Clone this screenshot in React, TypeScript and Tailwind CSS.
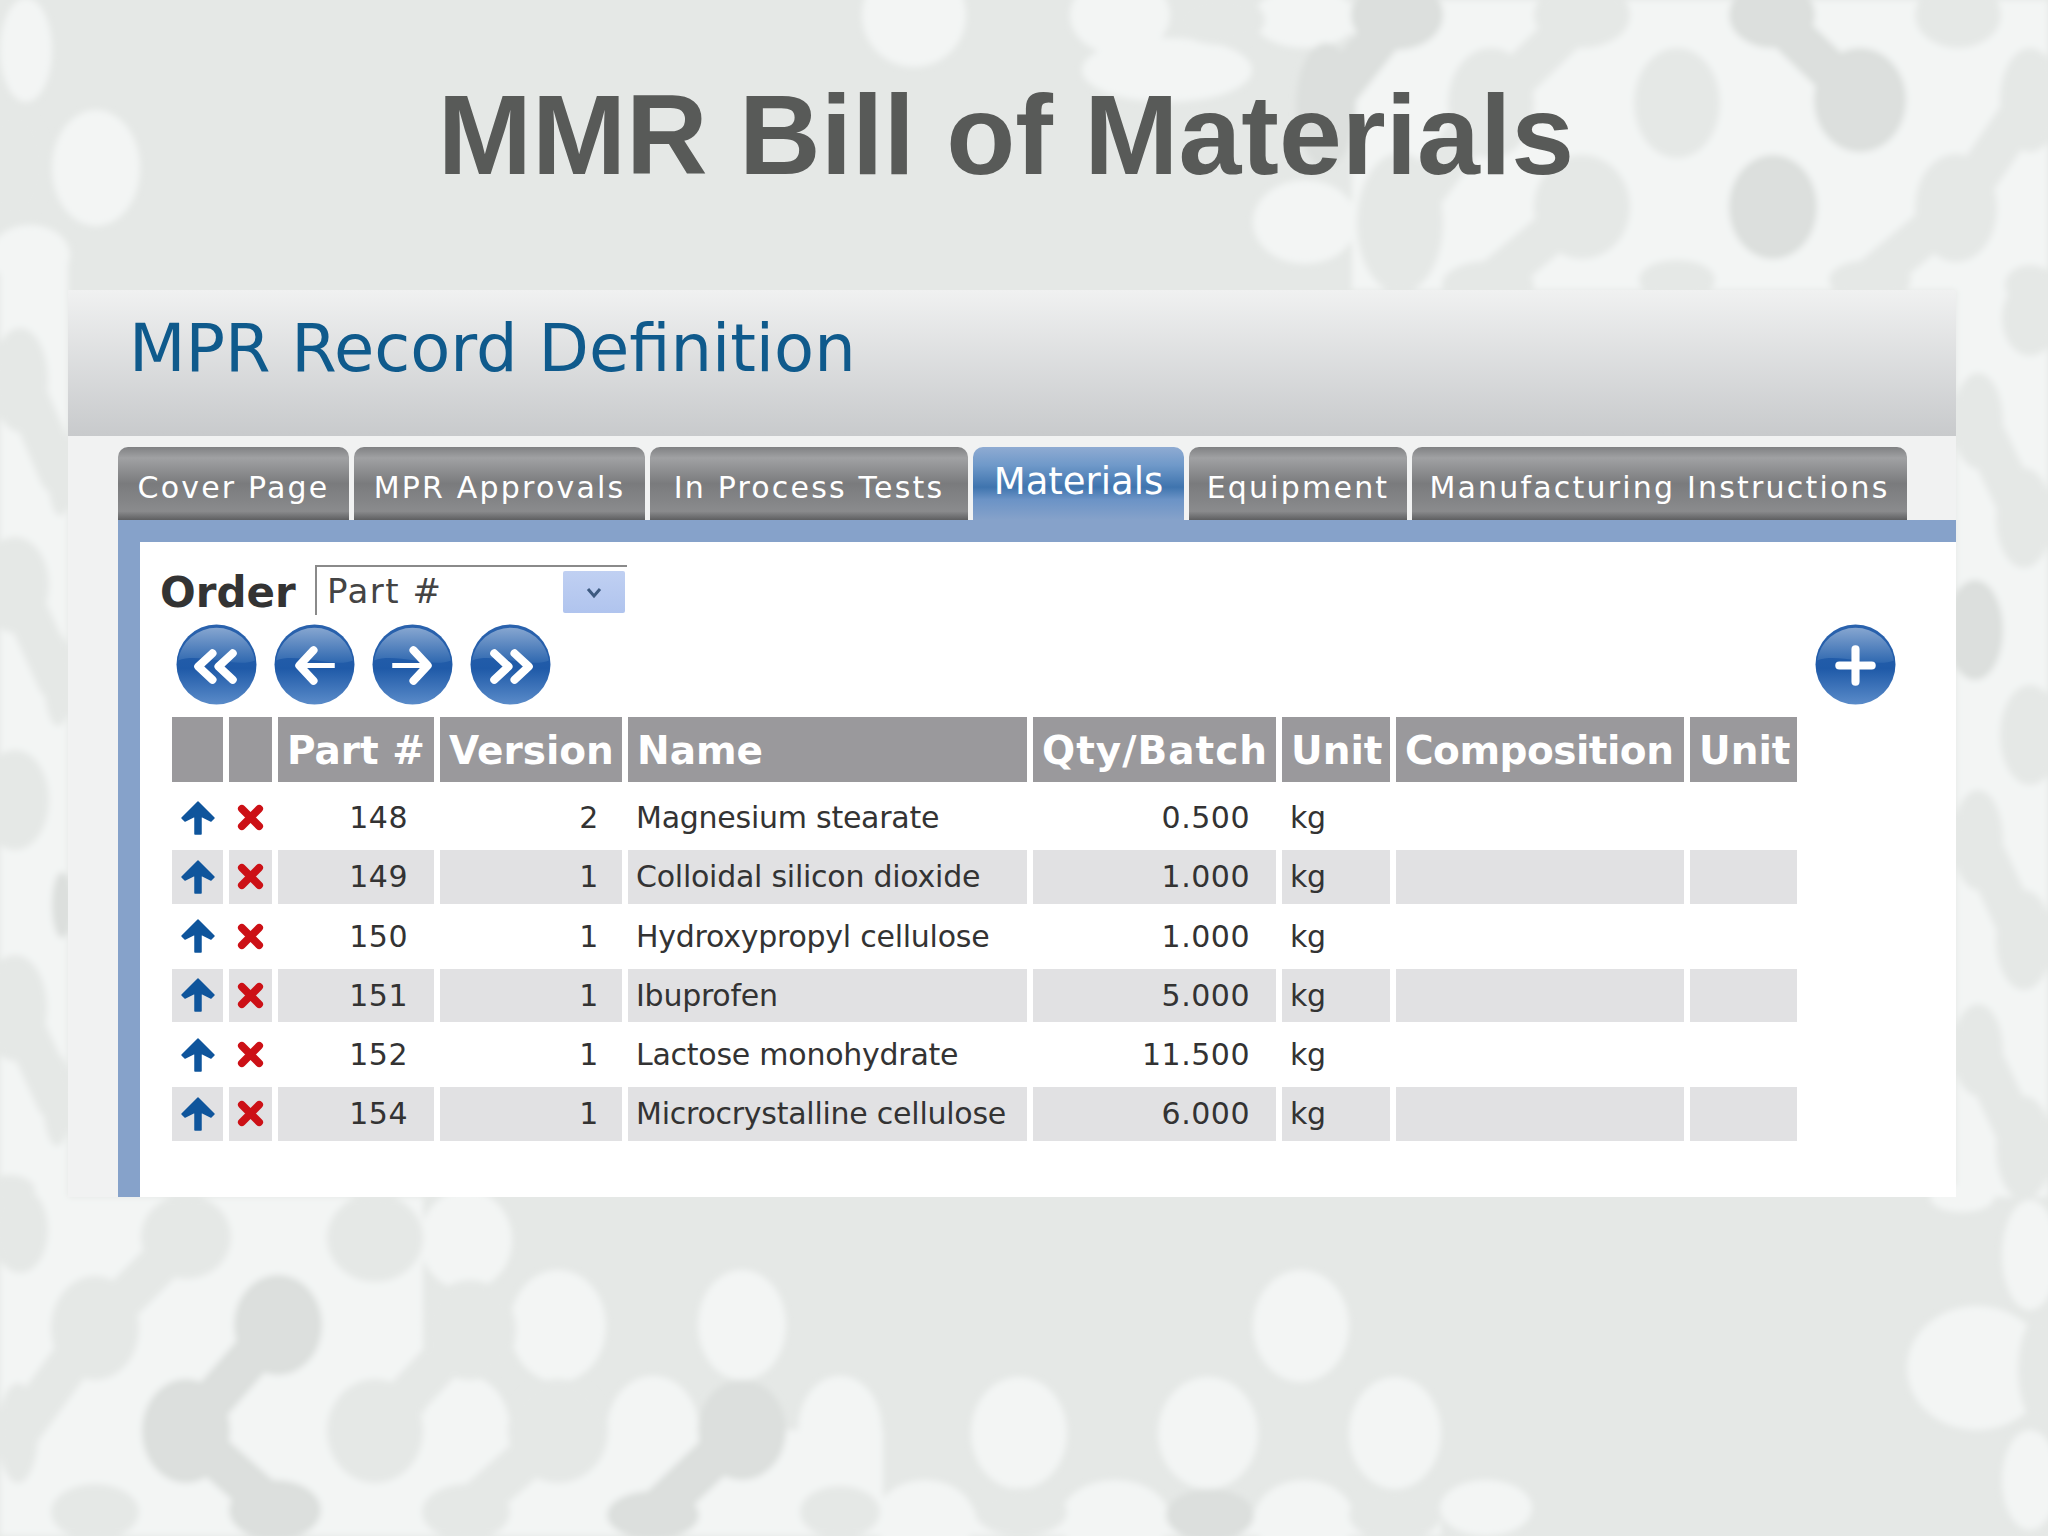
import { type FC } from "react";

const tabs = [
  { label: "Cover Page", width: "w-[231px]" },
  { label: "MPR Approvals", width: "w-[291px]" },
  { label: "In Process Tests", width: "w-[318px]" },
  { label: "Materials", width: "w-[211px]", active: true },
  { label: "Equipment", width: "w-[218px]" },
  { label: "Manufacturing Instructions", width: "w-[495px]" },
];

const headers = [
  { label: "", width: "w-[51px]", tracking: "" },
  { label: "", width: "w-[43px]", tracking: "" },
  { label: "Part #", width: "w-[156px]", tracking: "" },
  { label: "Version", width: "w-[182px]", tracking: "" },
  { label: "Name", width: "w-[399px]", tracking: "" },
  { label: "Qty/Batch", width: "w-[243px]", tracking: "tracking-[1px]" },
  { label: "Unit", width: "w-[108px]", tracking: "" },
  { label: "Composition", width: "w-[288px]", tracking: "tracking-[-0.5px]" },
  { label: "Unit", width: "w-[107px]", tracking: "" },
];

const rows = [
  { part: "148", version: "2", name: "Magnesium stearate", qty: "0.500" },
  { part: "149", version: "1", name: "Colloidal silicon dioxide", qty: "1.000" },
  { part: "150", version: "1", name: "Hydroxypropyl cellulose", qty: "1.000" },
  { part: "151", version: "1", name: "Ibuprofen", qty: "5.000" },
  { part: "152", version: "1", name: "Lactose monohydrate", qty: "11.500" },
  { part: "154", version: "1", name: "Microcrystalline cellulose", qty: "6.000" },
];

// background pattern: x y w h
const lightRects = [
  [1352, 0, 696, 290],
  [0, 250, 68, 977],
  [1956, 290, 92, 907],
  [0, 1197, 423, 339],
  [423, 1430, 460, 106],
  [880, 1510, 561, 26],
];

// cx cy rx ry
const lightBlobs = [
  [26, 50, 26, 52], [96, 168, 44, 58], [30, 255, 40, 30], [914, 15, 52, 52], [1120, 15, 50, 40], [1167, 70, 85, 32], [1305, 222, 52, 42], [1305, 18, 52, 30],
  [466, 1240, 46, 50], [558, 1326, 48, 56], [742, 1325, 44, 55], [466, 1430, 44, 54], [653, 1430, 46, 54], [840, 1430, 42, 54],
  [1301, 1326, 48, 56], [1019, 1433, 48, 56], [1208, 1433, 50, 56], [1395, 1433, 46, 56], [1486, 1508, 46, 28],
  [925, 1520, 50, 40], [1115, 1520, 55, 40], [1304, 1520, 50, 40],
  [1977, 1368, 70, 62], [2030, 1255, 28, 55], [2030, 1480, 28, 50], [1962, 1198, 32, 14],
];

const baseHoles = [
  [1220, 20, 45, 25],
  [1582, 15, 48, 33], [1491, 103, 43, 55], [1400, 223, 43, 70], [1582, 207, 48, 52], [1488, 285, 46, 24], [1677, 103, 43, 55],
  [1958, 15, 43, 33], [1956, 208, 41, 54], [2030, 100, 30, 52], [1870, 280, 41, 20], [1677, 280, 38, 20], [2030, 285, 25, 20],
  [15, 165, 32, 55], [20, 380, 28, 52], [60, 474, 12, 42], [15, 585, 34, 48], [58, 680, 14, 46], [15, 800, 34, 50], [15, 1008, 32, 53], [57, 1100, 14, 46], [10, 1190, 25, 15],
  [2030, 318, 28, 38], [1978, 421, 25, 48], [2024, 518, 28, 50], [2030, 735, 30, 50], [1978, 840, 25, 50], [2024, 940, 28, 50], [1978, 1050, 25, 46], [2024, 1148, 28, 52],
  [20, 1230, 28, 43], [186, 1237, 45, 42], [375, 1238, 48, 44], [95, 1328, 44, 52], [18, 1433, 20, 50], [375, 1431, 48, 52], [470, 1330, 46, 50], [558, 1431, 50, 52], [466, 1512, 44, 28], [95, 1512, 44, 28],
  [840, 1512, 40, 26], [1021, 1512, 46, 24], [1395, 1515, 46, 26], [2040, 1370, 22, 54],
];

const darkHoles = [
  [1397, 15, 46, 35], [1326, 105, 30, 62],
  [1772, 15, 43, 33], [1860, 100, 46, 52], [1773, 207, 44, 52],
  [62, 905, 10, 33], [1975, 630, 28, 50],
  [278, 1325, 44, 50], [186, 1431, 44, 52], [275, 1510, 46, 30], [742, 1430, 44, 50], [653, 1515, 46, 24], [1210, 1515, 44, 26],
];

// necks joining the holes
const baseNecks = [
  "M1582 15 L1491 103 L1400 223",
  "M1582 207 L1488 285",
  "M2030 100 L1956 208 L1870 280",
  "M20 380 L60 474",
  "M15 585 L58 680",
  "M15 1008 L57 1100",
  "M1978 421 L2024 518",
  "M1978 840 L2024 940",
  "M1978 1050 L2024 1148",
  "M186 1237 L95 1328 L18 1433",
  "M470 1330 L375 1431",
  "M558 1431 L466 1512",
];

const darkNecks = [
  "M1397 15 L1326 105",
  "M1772 15 L1860 100",
  "M278 1325 L186 1431 L275 1510",
  "M742 1430 L653 1515",
];

const Background: FC = () => (
  <svg viewBox="0 0 2048 1536" className="absolute inset-0 h-[1536px] w-[2048px]">
    <defs>
      <filter id="soft">
        <feGaussianBlur stdDeviation="3" />
      </filter>
    </defs>
    <g filter="url(#soft)">
      <g fill="#f3f5f4">
        {lightRects.map((r, i) => (
          <rect key={i} x={r[0]} y={r[1]} width={r[2]} height={r[3]} />
        ))}
        {lightBlobs.map((b, i) => (
          <ellipse key={i} cx={b[0]} cy={b[1]} rx={b[2]} ry={b[3]} />
        ))}
      </g>
      <g fill="#e5e8e6">
        {baseHoles.map((b, i) => (
          <ellipse key={i} cx={b[0]} cy={b[1]} rx={b[2]} ry={b[3]} />
        ))}
      </g>
      <g fill="none" stroke="#e5e8e6" strokeWidth="42" strokeLinecap="round" strokeLinejoin="round">
        {baseNecks.map((d) => (
          <path key={d} d={d} />
        ))}
      </g>
      <g fill="#dcdfdd">
        {darkHoles.map((b, i) => (
          <ellipse key={i} cx={b[0]} cy={b[1]} rx={b[2]} ry={b[3]} />
        ))}
      </g>
      <g fill="none" stroke="#dcdfdd" strokeWidth="42" strokeLinecap="round" strokeLinejoin="round">
        {darkNecks.map((d) => (
          <path key={d} d={d} />
        ))}
      </g>
    </g>
  </svg>
);

const RoundIcon: FC<{ id: string; d: string; tail?: string; className?: string }> = ({ id, d, tail, className }) => (
  <svg viewBox="0 0 80 80" className={className}>
    <defs>
      <linearGradient id={`${id}-b`} x1="0" y1="0" x2="0" y2="1">
        <stop offset="0" stopColor="#2a62ad" />
        <stop offset="0.55" stopColor="#1f5aa8" />
        <stop offset="1" stopColor="#5a8bc9" />
      </linearGradient>
      <linearGradient id={`${id}-t`} x1="0" y1="0" x2="0" y2="1">
        <stop offset="0" stopColor="#86a6d0" />
        <stop offset="1" stopColor="#2f68b0" />
      </linearGradient>
    </defs>
    <circle cx="40" cy="40" r="39.5" fill={`url(#${id}-b)`} />
    <path d="M2 36 A38.5 38.5 0 0 1 78 36 C60 44 24 28 2 36 Z" fill={`url(#${id}-t)`} />
    <path d={d} fill="none" stroke="#fff" strokeWidth="8" strokeLinecap="round" strokeLinejoin="round" />
    {tail && <path d={tail} fill="none" stroke="#fff" strokeWidth="5" />}
  </svg>
);

const UpArrow: FC = () => (
  <svg viewBox="0 0 36 36" className="h-[36px] w-[36px]">
    <path d="M18 2 L34 18 L31 21 L21 16 L21 34 L15 34 L15 16 L5 21 L2 18 Z" fill="#0f559c" stroke="#0f559c" strokeWidth="1.5" strokeLinejoin="round" />
  </svg>
);

const RedX: FC = () => (
  <svg viewBox="0 0 28 28" className="h-[27px] w-[27px]">
    <path d="M5 5 L23 23 M23 5 L5 23" stroke="#cc1016" strokeWidth="8" strokeLinecap="round" fill="none" />
  </svg>
);

const App: FC = () => {
  return (
    <div className="relative h-[1536px] w-[2048px] overflow-hidden bg-[#e5e8e6] font-['DejaVu_Sans',sans-serif]">
      <Background />
      <div className="relative flex flex-col">
        <h1 className="flex h-[290px] justify-center pt-[60px] pr-[36px] font-['Liberation_Sans',sans-serif] text-[113px] leading-[150px] font-bold text-[#585a58]">
          MMR Bill of Materials
        </h1>

        <div className="ml-[68px] w-[1888px] bg-[#f1f2f2]">
          <div className="h-[146px] bg-gradient-to-b from-[#f0f1f1] to-[#c8cacc] pt-[19px] pl-[61px] text-[65.5px] leading-[78px] text-[#0f5a8c]">
            MPR Record Definition
          </div>

          <div className="ml-[50px] flex h-[84px] items-end gap-[5px]">
            {tabs.map((tab) =>
              tab.active ? (
                <div
                  key={tab.label}
                  className={`${tab.width} flex h-[73px] justify-center rounded-t-[10px] bg-[linear-gradient(#8fabd2_0%,#6f99c9_25%,#3f74ae_55%,#6b93c6_72%,#86a2ca_100%)] pt-[13px] text-[37px] leading-[44px] text-white`}
                >
                  {tab.label}
                </div>
              ) : (
                <div
                  key={tab.label}
                  className={`${tab.width} flex h-[73px] justify-center rounded-t-[10px] bg-[linear-gradient(#808183_0%,#a0a1a3_15%,#7a7b7d_50%,#8a8b8d_88%,#5e5f61_100%)] pt-[23px] text-[30px] leading-[36px] tracking-[2.2px] whitespace-nowrap text-white`}
                >
                  {tab.label}
                </div>
              )
            )}
          </div>

          <div className="ml-[50px] h-[677px] border-t-[22px] border-l-[22px] border-[#86a2ca] bg-white pt-[23px]">
            <div className="flex h-[50px] items-center pl-[20px]">
              <span className="w-[155px] pt-[6px] text-[42px] leading-[50px] font-bold text-[#333]">Order</span>
              <div className="relative flex h-[50px] w-[312px] items-center border-t-2 border-l-2 border-[#8a8a8a] pl-[10px] text-[34px] tracking-[1.5px] text-[#444]">
                Part #
                <div className="absolute top-[4px] right-[2px] flex h-[42px] w-[62px] items-center justify-center rounded-[2px] bg-gradient-to-b from-[#c0d0f2] to-[#b0c4ee]">
                  <svg viewBox="0 0 20 20" className="h-[20px] w-[20px]">
                    <path d="M4 7 L10 14 L16 7" fill="none" stroke="#3d5a80" strokeWidth="3" />
                  </svg>
                </div>
              </div>
            </div>

            <div className="mt-[9px] flex h-[81px] items-center justify-between pr-[60px] pl-[36px]">
              <div className="flex gap-[17px]">
                <RoundIcon id="first" className="h-[81px] w-[81px]" d="M36 29 L22 42 L36 55 M56 29 L42 42 L56 55" />
                <RoundIcon id="prev" className="h-[81px] w-[81px]" d="M39 26 L25 41 L39 56" tail="M28 41 L60 41" />
                <RoundIcon id="next" className="h-[81px] w-[81px]" d="M41 26 L55 41 L41 56" tail="M20 41 L52 41" />
                <RoundIcon id="last" className="h-[81px] w-[81px]" d="M24 29 L38 42 L24 55 M44 29 L58 42 L44 55" />
              </div>
              <RoundIcon id="add" className="h-[81px] w-[81px]" d="M40 25 L40 57 M24 41 L56 41" />
            </div>

            <div className="mt-[12px] ml-[32px] flex flex-col">
              <div className="flex gap-[6px]">
                {headers.map((h, i) => (
                  <div
                    key={i}
                    className={`${h.width} ${h.tracking} h-[65px] overflow-hidden bg-[#9a999c] pl-[9px] text-[39px] leading-[68px] font-bold whitespace-nowrap text-white`}
                  >
                    {h.label}
                  </div>
                ))}
              </div>
              <div className="mt-[9px] flex flex-col gap-[6px]">
                {rows.map((row, i) => {
                  const bg = i % 2 === 1 ? "bg-[#e1e1e3]" : "";
                  return (
                    <div key={row.part} className="flex h-[53.25px] gap-[6px] text-[30px] leading-[53px] tracking-[-0.25px] text-[#333]">
                      <div className={`${bg} flex w-[51px] items-center justify-center`}>
                        <UpArrow />
                      </div>
                      <div className={`${bg} flex w-[43px] items-center justify-center`}>
                        <RedX />
                      </div>
                      <div className={`${bg} w-[156px] pr-[26px] text-right tracking-[0.5px]`}>{row.part}</div>
                      <div className={`${bg} w-[182px] pr-[24px] text-right`}>{row.version}</div>
                      <div className={`${bg} w-[399px] pl-[8px]`}>{row.name}</div>
                      <div className={`${bg} w-[243px] pr-[26px] text-right tracking-[0.5px]`}>{row.qty}</div>
                      <div className={`${bg} w-[108px] pl-[8px]`}>kg</div>
                      <div className={`${bg} w-[288px]`} />
                      <div className={`${bg} w-[107px]`} />
                    </div>
                  );
                })}
              </div>
            </div>
          </div>
        </div>
      </div>
    </div>
  );
};

export default App;
